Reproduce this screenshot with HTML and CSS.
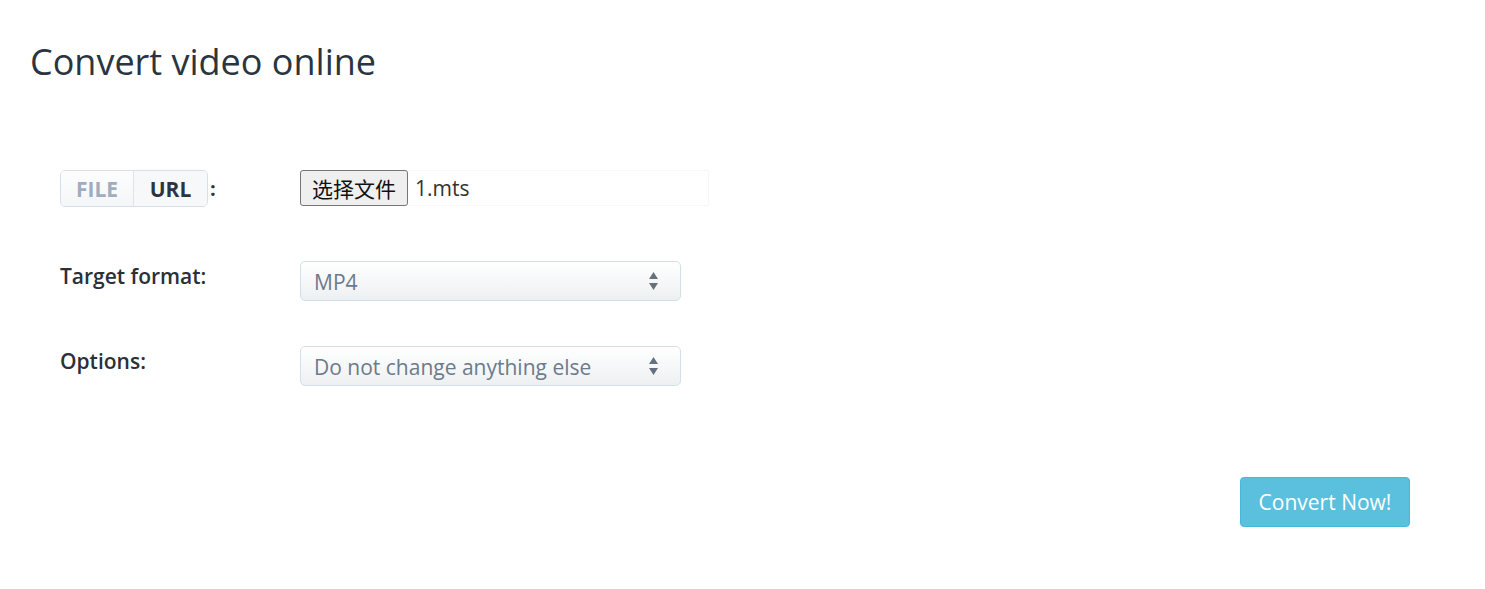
FILE: index.html
```html
<!DOCTYPE html>
<html lang="en">
<head>
<meta charset="utf-8">
<title>Convert video online</title>
<link rel="stylesheet" href="styles.css">
</head>
<body>
<main class="page">
  <h1 class="title">Convert video online</h1>
  <form class="form">
    <div class="row row-file">
      <div class="label">
        <div class="toggle">
          <span class="seg seg-file">FILE</span>
          <span class="seg seg-url">URL</span>
        </div>
        <span class="colon">:</span>
      </div>
      <div class="control">
        <div class="filebox">
          <span class="filebtn">选择文件</span>
          <span class="filename">1.mts</span>
        </div>
      </div>
    </div>
    <div class="row row-target">
      <div class="label"><span class="label-text">Target format:</span></div>
      <div class="control">
        <div class="select">
          <span class="select-text">MP4</span>
          <svg class="arrows" width="11" height="20" viewBox="0 0 11 20"><path d="M5.5 1 L10 8 H1 Z M5.5 19 L10 12 H1 Z" fill="#66717e"/></svg>
        </div>
      </div>
    </div>
    <div class="row row-options">
      <div class="label"><span class="label-text">Options:</span></div>
      <div class="control">
        <div class="select">
          <span class="select-text">Do not change anything else</span>
          <svg class="arrows" width="11" height="20" viewBox="0 0 11 20"><path d="M5.5 1 L10 8 H1 Z M5.5 19 L10 12 H1 Z" fill="#66717e"/></svg>
        </div>
      </div>
    </div>
    <div class="actions">
      <button type="button" class="convert">Convert Now!</button>
    </div>
  </form>
</main>
</body>
</html>
```
FILE: styles.css
```css
* { box-sizing: border-box; }
html, body { margin: 0; padding: 0; background: #fff; }
body {
  font-family: "Open Sans", "Noto Sans", sans-serif;
  color: #2a3340;
}
.page {
  padding: 0 75px 0 30px;
}
.title {
  margin: 0;
  padding-top: 38px;
  font-size: 36px;
  font-weight: 400;
  line-height: 48px;
  color: #2b3441;
}
.form {
  margin-top: 84px;
  padding-left: 30px;
}
.row {
  display: flex;
  align-items: flex-start;
}
.label {
  width: 240px;
  flex: none;
  display: flex;
  align-items: center;
}
.row-file { height: 37px; }
.row-target { margin-top: 54px; }
.row-options { margin-top: 45px; }
.label-text {
  font-size: 21px;
  font-weight: 600;
  line-height: 26px;
  padding-top: 2px;
  color: #2b3038;
}
.toggle {
  display: flex;
  border: 1px solid #d6e0e8;
  border-radius: 5px;
  overflow: hidden;
  height: 37px;
}
.seg {
  display: flex;
  align-items: center;
  justify-content: center;
  width: 73px;
  font-size: 21px;
  font-weight: 700;
}
.seg-file {
  color: #9fadbf;
  background: linear-gradient(#fdfdfe, #f3f6f8);
  border-right: 1px solid #dde4ea;
}
.seg-url {
  color: #2b3441;
  background: #f7f8f9;
}
.colon {
  font-size: 20px;
  font-weight: 700;
  margin-left: 2px;
  color: #2b3441;
}
.filebox {
  display: flex;
  align-items: center;
  width: 409px;
  height: 36px;
  border: 1px solid #f6f7f8;
}
.filebtn {
  display: flex;
  align-items: center;
  justify-content: center;
  width: 108px;
  height: 36px;
  margin: -1px 0 0 -1px;
  background: #efefef;
  border: 1px solid #767676;
  border-radius: 3px;
  font-family: "Noto Sans CJK SC", sans-serif;
  font-size: 21px;
  color: #111;
}
.filename {
  margin-left: 7px;
  font-size: 21px;
  color: #333;
}
.select {
  display: flex;
  align-items: center;
  justify-content: space-between;
  width: 381px;
  height: 40px;
  padding: 0 21px 0 13px;
  border: 1px solid #d3e0e8;
  border-radius: 5px;
  background: linear-gradient(#ffffff, #edf0f2);
}
.select-text {
  font-size: 21px;
  padding-top: 2px;
  color: #6c7a8b;
}
.arrows { display: block; }
.actions {
  display: flex;
  justify-content: flex-end;
  margin-top: 91px;
}
.convert {
  width: 170px;
  height: 50px;
  background: #5bc0de;
  border: 1px solid #46b8da;
  border-radius: 4px;
  color: #fff;
  font-family: "Open Sans", sans-serif;
  font-size: 21px;
  padding: 0;
}
```
